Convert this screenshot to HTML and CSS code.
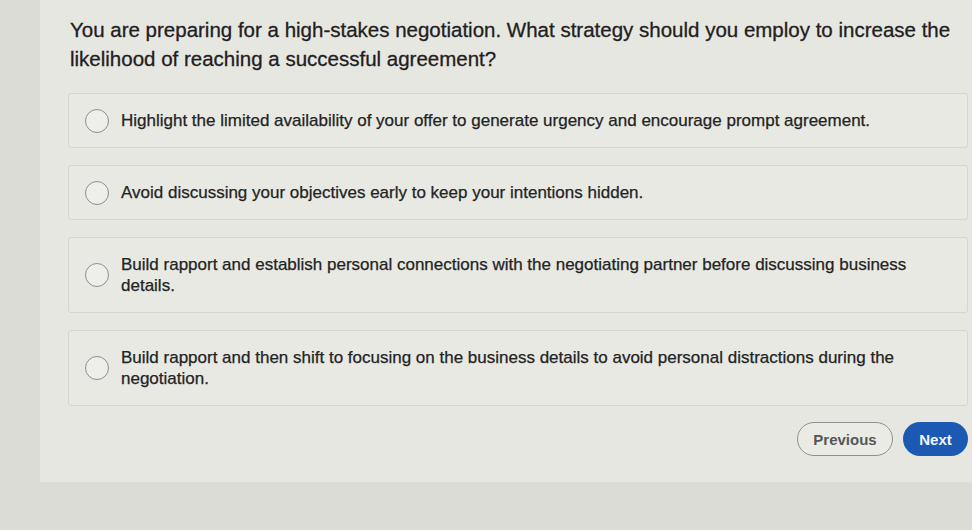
FILE: index.html
```html
<!DOCTYPE html>
<html lang="en">
<head>
    <meta charset="UTF-8">
    <meta name="viewport" content="width=device-width, initial-scale=1.0">
    <title>Negotiation Quiz</title>
    <link rel="stylesheet" href="styles.css">
</head>
<body>
    <div class="page">
        <div class="panel">
            <p class="question">You are preparing for a high-stakes negotiation. What strategy should you employ to increase the likelihood of reaching a successful agreement?</p>

            <div class="options">
                <label class="option">
                    <span class="radio"></span>
                    <span class="option-text">Highlight the limited availability of your offer to generate urgency and encourage prompt agreement.</span>
                </label>
                <label class="option">
                    <span class="radio"></span>
                    <span class="option-text">Avoid discussing your objectives early to keep your intentions hidden.</span>
                </label>
                <label class="option tall">
                    <span class="radio"></span>
                    <span class="option-text">Build rapport and establish personal connections with the negotiating partner before discussing business details.</span>
                </label>
                <label class="option tall">
                    <span class="radio"></span>
                    <span class="option-text">Build rapport and then shift to focusing on the business details to avoid personal distractions during the negotiation.</span>
                </label>
            </div>

            <div class="actions">
                <button class="btn btn-outline">Previous</button>
                <button class="btn btn-primary">Next</button>
            </div>
        </div>
    </div>
</body>
</html>
```

FILE: styles.css
```css
body {
    margin: 0;
    background: #d8d8d2;
    font-family: "Liberation Sans", Arial, sans-serif;
    color: #2b2c2c;
}
.page {
    height: 530px;
    padding-left: 40px;
    background: #dcdcd6;
}
.panel {
    background: #e7e7e2;
    height: 482px;
    padding: 15px 4px 0 28px;
    box-sizing: border-box;
}
.question {
    margin: 0 0 20px 2px;
    font-size: 20.5px;
    line-height: 29px;
    color: #1f2020;
    -webkit-text-stroke: 0.3px #1f2020;
}
.options {
    display: flex;
    flex-direction: column;
    gap: 17px;
}
.option {
    display: flex;
    align-items: center;
    gap: 12px;
    min-height: 55px;
    padding: 0 50px 0 16px;
    box-sizing: border-box;
    background: #e9e9e4;
    border: 1px solid #d5d6d0;
    border-radius: 3px;
}
.option.tall {
    min-height: 76px;
}
.radio {
    flex: none;
    width: 24px;
    height: 24px;
    border: 1.5px solid #8d8f8e;
    border-radius: 50%;
    box-sizing: border-box;
    background: #eeeeea;
}
.option-text {
    font-size: 17px;
    line-height: 21px;
    color: #222323;
    -webkit-text-stroke: 0.25px #222323;
}
.actions {
    display: flex;
    justify-content: flex-end;
    gap: 10px;
    margin-top: 16px;
}
.btn {
    font-family: "Liberation Sans", Arial, sans-serif;
    font-size: 15px;
    font-weight: bold;
    height: 34px;
    border-radius: 17px;
    cursor: pointer;
}
.btn-outline {
    width: 96px;
    background: #ebebe6;
    border: 1.5px solid #8e908e;
    color: #555757;
}
.btn-primary {
    width: 65px;
    background: #1b59b3;
    border: none;
    color: #f4f6fa;
}
```
